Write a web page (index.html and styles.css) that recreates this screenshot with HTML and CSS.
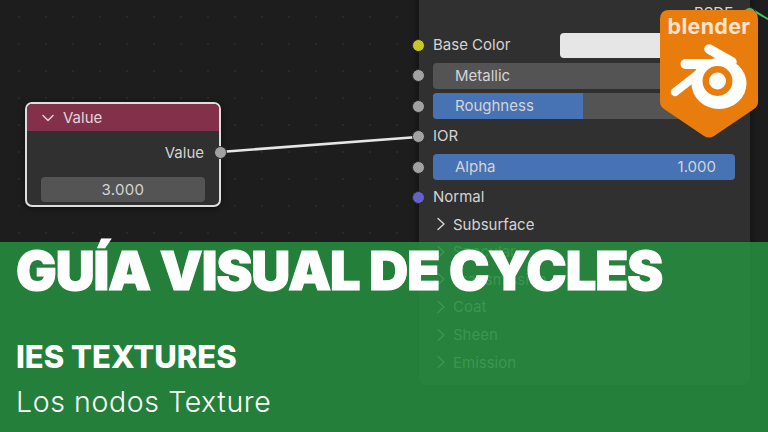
FILE: index.html
```html
<!DOCTYPE html>
<html lang="es">
<head>
<meta charset="UTF-8">
<title>Guía visual de Cycles</title>
<link rel="stylesheet" href="styles.css">
</head>
<body>
    <div class="editor">
        <!-- links between nodes -->
        <svg class="links" width="768" height="432" viewBox="0 0 768 432">
            <path d="M220 152 L418 137" stroke="#e6e6e6" stroke-width="2.6" fill="none"/>
            <path d="M750 9 C757 12 762 16 768 19" stroke="#3fbf5f" stroke-width="2" fill="none"/>
        </svg>

        <div class="node value-node">
            <div class="node-head">
                <svg class="chevron" width="12" height="12" viewBox="0 0 12 12"><path d="M1 3.5 L6 8.5 L11 3.5"/></svg>
                Value
            </div>
            <div class="value-output">Value<span class="socket grey"></span></div>
            <div class="field centered">3.000</div>
        </div>

        <div class="node bsdf-node">
            <div class="bsdf-title">BSDF<span class="socket green"></span></div>
            <div class="row"><span class="socket yellow"></span><span class="row-label">Base Color</span><span class="swatch"></span></div>
            <div class="row"><span class="socket grey"></span><div class="field">Metallic</div></div>
            <div class="row"><span class="socket grey"></span><div class="field rough"><span class="fill"></span><span class="field-text">Roughness</span></div></div>
            <div class="row"><span class="socket grey"></span><span class="row-label">IOR</span></div>
            <div class="row"><span class="socket grey"></span><div class="field blue">Alpha<span class="field-value">1.000</span></div></div>
            <div class="row"><span class="socket violet"></span><span class="row-label">Normal</span></div>
            <div class="subs">
                <div class="sub"><svg class="chevron" width="10" height="14" viewBox="0 0 10 14"><path d="M2 1.5 L8 7 L2 12.5"/></svg>Subsurface</div>
                <div class="sub"><svg class="chevron" width="10" height="14" viewBox="0 0 10 14"><path d="M2 1.5 L8 7 L2 12.5"/></svg>Specular</div>
                <div class="sub"><svg class="chevron" width="10" height="14" viewBox="0 0 10 14"><path d="M2 1.5 L8 7 L2 12.5"/></svg>Transmission</div>
                <div class="sub"><svg class="chevron" width="10" height="14" viewBox="0 0 10 14"><path d="M2 1.5 L8 7 L2 12.5"/></svg>Coat</div>
                <div class="sub"><svg class="chevron" width="10" height="14" viewBox="0 0 10 14"><path d="M2 1.5 L8 7 L2 12.5"/></svg>Sheen</div>
                <div class="sub"><svg class="chevron" width="10" height="14" viewBox="0 0 10 14"><path d="M2 1.5 L8 7 L2 12.5"/></svg>Emission</div>
            </div>
        </div>

        <!-- orange badge -->
        <div class="badge">
            <svg class="badge-shape" width="98" height="128" viewBox="0 0 98 128">
                <path d="M9 0 H89 Q98 0 98 9 V92 Q98 96 94 99 L54 126 Q49 129 44 126 L4 99 Q0 96 0 92 V9 Q0 0 9 0 Z" fill="#e87d0d"/>
                <!-- logo mark, origin is the badge corner -->
                <ellipse cx="59" cy="73.5" rx="27.5" ry="25.5" fill="#fff"/>
                <path d="M49 39 L72 52" stroke="#fff" stroke-width="9.5" stroke-linecap="round"/>
                <path d="M25.5 54 H54" stroke="#fff" stroke-width="10" stroke-linecap="round"/>
                <path d="M15 82 L42 61" stroke="#fff" stroke-width="8.5" stroke-linecap="round"/>
                <circle cx="57.5" cy="71" r="15" fill="#e87d0d"/>
                <circle cx="57.5" cy="71" r="8.5" fill="#fff"/>
            </svg>
            <div class="badge-text">blender</div>
        </div>

        <div class="banner">
            <div class="banner-title">GUÍA VISUAL DE CYCLES</div>
            <div class="banner-topic">IES TEXTURES</div>
            <div class="banner-sub">Los nodos Texture</div>
        </div>
    </div>
</body>
</html>
```

FILE: styles.css
```css
* {
    margin: 0;
    padding: 0;
    box-sizing: border-box;
}
html, body {
    width: 768px;
    height: 432px;
    overflow: hidden;
}

/* node editor canvas */
.editor {
    position: relative;
    width: 768px;
    height: 432px;
    overflow: hidden;
    background-color: #1d1d1d;
    background-image: radial-gradient(circle at 1px 1px, #292929 1px, transparent 1.2px);
    background-size: 27px 27px;
    background-position: 18px 16px;
    font-family: "Inter", "Liberation Sans", sans-serif;
    font-size: 15px;
    color: #d4d4d4;
}
.links {
    position: absolute;
    top: 0;
    left: 0;
    z-index: 2;
}

/* nodes sit on a free canvas */
.node {
    position: absolute;
    background-color: #303030;
}
.chevron {
    fill: none;
    stroke: currentColor;
    stroke-width: 1.4;
    stroke-linecap: round;
    stroke-linejoin: round;
    flex: none;
}
.socket {
    position: absolute;
    width: 13px;
    height: 13px;
    border-radius: 50%;
    border: 1px solid #2a2a2a;
    z-index: 3;
}
.socket.grey { background-color: #a1a1a1; }
.socket.yellow { background-color: #c7c729; }
.socket.violet { background-color: #6363c7; }
.socket.green { background-color: #3fbf5f; }

/* value node */
.value-node {
    left: 25px;
    top: 102px;
    width: 196px;
    height: 105px;
    border: 2px solid #dedede;
    border-radius: 7px;
    box-shadow: 0 1px 6px rgba(0, 0, 0, 0.5);
}
.node-head {
    display: flex;
    align-items: center;
    gap: 9px;
    height: 27px;
    padding-left: 15px;
    background-color: #83314b;
    border-radius: 5px 5px 0 0;
    color: #e0d6d9;
}
.value-output {
    position: relative;
    height: 18px;
    margin-top: 13px;
    padding-right: 15px;
    line-height: 18px;
    text-align: right;
}
.value-output .socket {
    right: -8px;
    top: 2px;
}
.value-node .field {
    margin: 15px 14px 0;
}

/* principled node */
.bsdf-node {
    left: 419px;
    top: -10px;
    width: 331px;
    height: 395px;
    padding: 0 15px 0 14px;
    border-radius: 0 0 7px 7px;
    box-shadow: 0 0 8px rgba(0, 0, 0, 0.5);
}
.bsdf-title {
    position: relative;
    height: 40px;
    padding: 14px 2px 0 0;
    text-align: right;
    line-height: 18px;
}
.bsdf-title .socket {
    right: -21px;
    top: 17px;
}
.row {
    position: relative;
    display: flex;
    align-items: center;
    justify-content: space-between;
    height: 30.4px;
}
.row .socket {
    left: -21px;
    top: 9px;
}
.row-label {
    padding-bottom: 1px;
}
.swatch {
    width: 175px;
    height: 25px;
    background-color: #e6e6e6;
    border-radius: 4px;
}
.field {
    position: relative;
    display: flex;
    align-items: center;
    justify-content: space-between;
    width: 100%;
    height: 26px;
    padding: 0 19px 0 22px;
    background-color: #545454;
    border-radius: 4px;
    overflow: hidden;
}
.field.centered {
    width: auto;
    height: 25px;
    justify-content: center;
    padding: 0;
    letter-spacing: 0.3px;
}
.field.blue {
    background-color: #4772b3;
}
.fill {
    position: absolute;
    top: 0;
    bottom: 0;
    left: 0;
    width: 150px;
    background-color: #4772b3;
}
.field-text {
    position: relative;
}
.subs {
    margin-top: -2px;
}
.sub {
    display: flex;
    align-items: center;
    gap: 7px;
    height: 27.6px;
    padding-left: 3px;
}

/* blender badge */
.badge {
    position: absolute;
    left: 660px;
    top: 10px;
    width: 98px;
    height: 128px;
    z-index: 5;
}
.badge-shape {
    display: block;
}
.badge-text {
    position: absolute;
    top: 3px;
    left: 0;
    width: 100%;
    text-align: center;
    font-size: 21.5px;
    font-weight: 700;
    letter-spacing: 0.3px;
    color: #fbe3cf;
}

/* green banner over the screenshot */
.banner {
    position: absolute;
    left: 0;
    right: 0;
    top: 242px;
    bottom: 0;
    z-index: 4;
    display: flex;
    flex-direction: column;
    padding-left: 16px;
    background-color: rgba(36, 141, 62, 0.88);
    color: #fff;
}
.banner-title {
    margin-top: 1px;
    font-size: 54px;
    line-height: 56px;
    font-weight: 900;
    letter-spacing: -1.05px;
    -webkit-text-stroke: 1.2px #fff;
    white-space: nowrap;
}
.banner-topic {
    margin-top: 40px;
    font-size: 31px;
    line-height: 36px;
    font-weight: 800;
}
.banner-sub {
    margin-top: 9px;
    font-size: 28.5px;
    line-height: 36px;
    font-weight: 300;
    letter-spacing: 0.6px;
}
```
